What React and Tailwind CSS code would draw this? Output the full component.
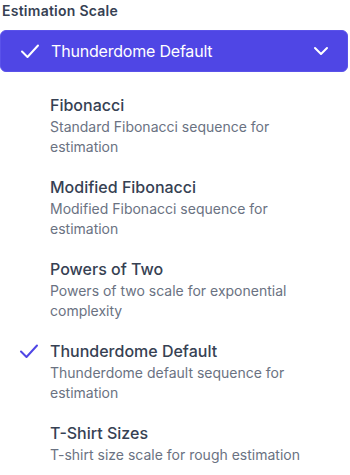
import React from "react";

const items = [
  { title: "Fibonacci", desc: "Standard Fibonacci sequence for estimation" },
  { title: "Modified Fibonacci", desc: "Modified Fibonacci sequence for estimation" },
  { title: "Powers of Two", desc: "Powers of two scale for exponential complexity" },
  { title: "Thunderdome Default", desc: "Thunderdome default sequence for estimation", selected: true },
  { title: "T-Shirt Sizes", desc: "T-shirt size scale for rough estimation" },
];

function Check({ className }) {
  return (
    <svg viewBox="0 0 24 24" width="24" height="24" fill="none" stroke="currentColor" strokeWidth="2" strokeLinecap="round" strokeLinejoin="round" className={className}>
      <path d="M5 12.5 10.5 18 21 6.5" />
    </svg>
  );
}

function Chevron() {
  return (
    <svg viewBox="0 0 24 24" width="24" height="24" fill="none" stroke="currentColor" strokeWidth="2" strokeLinecap="round" strokeLinejoin="round">
      <path d="m6 9 6 6 6-6" />
    </svg>
  );
}

export default function App() {
  return (
    <div className="w-[350px] h-[475px] bg-white overflow-hidden" style={{ fontFamily: "Inter, 'Noto Sans', sans-serif" }}>
      <div className="pl-[2px] pt-px text-sm leading-5 font-semibold tracking-[0.25px] text-gray-700">Estimation Scale</div>
      <button className="mt-[9px] flex w-[348px] h-[42px] items-center rounded-md border border-[#5a52ea] bg-[#4f46e5] pl-4 pr-3.5 text-white">
        <Check />
        <span className="ml-2.5 flex-1 text-left text-base leading-6 tracking-[-0.2px]">Thunderdome Default</span>
        <Chevron />
      </button>
      <ul className="mt-3">
        {items.map((it) => (
          <li key={it.title} className="flex py-[9px] pl-4 pr-8">
            <div className="w-6 shrink-0 text-[#4f46e5]">{it.selected ? <Check /> : null}</div>
            <div className="ml-2.5">
              <div className="text-base leading-6 font-medium text-gray-700">{it.title}</div>
              <div className="text-sm leading-5 text-gray-500">{it.desc}</div>
            </div>
          </li>
        ))}
      </ul>
    </div>
  );
}
